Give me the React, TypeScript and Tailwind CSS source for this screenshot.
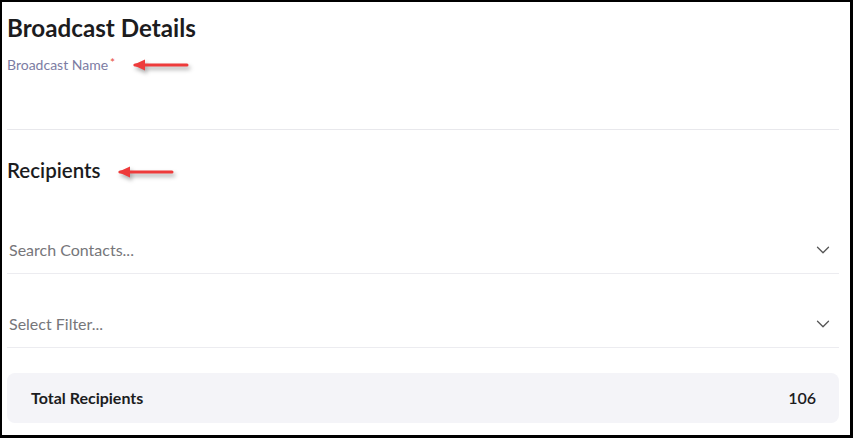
import { ChevronDown } from "lucide-react";

function Arrow() {
  return (
    <svg width="60" height="16" viewBox="0 0 60 16" className="drop-shadow-[2px_3px_2px_rgba(0,0,0,0.35)]">
      <path d="M4 8 L56 8" stroke="#ee3b3b" strokeWidth="3" strokeLinecap="round" />
      <path d="M2 8 L14 2.5 L14 13.5 Z" fill="#ee3b3b" />
    </svg>
  );
}

function SelectRow({ placeholder }: { placeholder: string }) {
  return (
    <div className="h-[48px] flex items-center justify-between border-b border-[#ececf0] pl-[2px] pr-[5px]">
      <span className="text-[16px] text-[#76767a]">{placeholder}</span>
      <ChevronDown className="w-[22px] h-[22px] text-[#555]" strokeWidth={1.4} />
    </div>
  );
}

export default function App() {
  return (
    <div
      className="w-[853px] h-[438px] bg-white border-black border-t-2 border-l-2 border-r-[3px] border-b-[3px] overflow-hidden"
      style={{ fontFamily: "Lato, 'Open Sans', sans-serif" }}
    >
      <div className="pl-[5px] pr-[11px]">
        <h1 className="mt-[10px] h-[32px] leading-[32px] text-[24.2px] font-bold text-[#1c1c1e]">
          Broadcast Details
        </h1>
        <div className="mt-[11px] h-[18px] flex items-center">
          <span className="text-[14px] text-[#7c7ca3]">Broadcast Name</span>
          <span className="text-[12px] text-[#e84c3d] ml-[2px] -mt-[2px]">*</span>
          <span className="ml-[16px] mt-[2px]">
            <Arrow />
          </span>
        </div>
        <div className="h-[57px] border-b border-[#e8e8ec]" />
        <div className="mt-[26px] h-[28px] flex items-center">
          <h2 className="text-[20.5px] font-semibold text-[#1c1c1e]">Recipients</h2>
          <span className="ml-[16px] mt-[4px]">
            <Arrow />
          </span>
        </div>
        <div className="mt-[42px]">
          <SelectRow placeholder="Search Contacts..." />
        </div>
        <div className="mt-[26px]">
          <SelectRow placeholder="Select Filter..." />
        </div>
        <div className="mt-[25px] h-[50px] rounded-lg bg-[#f4f4f8] flex items-center justify-between pl-[24px] pr-[23px]">
          <span className="text-[16px] font-bold text-[#1c1c1e]">Total Recipients</span>
          <span className="text-[16px] font-semibold text-[#1c1c1e]">106</span>
        </div>
      </div>
    </div>
  );
}
